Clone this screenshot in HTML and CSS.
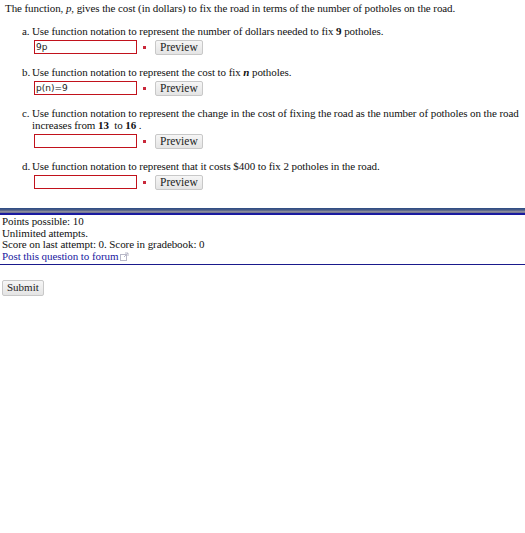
FILE: index.html
```html
<!DOCTYPE html>
<html>
<head>
<meta charset="utf-8">
<link rel="stylesheet" href="styles.css">
</head>
<body>
<div class="question">
  <p class="intro">The function, <i>p</i>, gives the cost (in dollars) to fix the road in terms of the number of potholes on the road.</p>
  <div class="part">
    <div class="prompt"><span class="lbl">a.</span><span class="txt">Use function notation to represent the number of dollars needed to fix <b>9</b> potholes.</span></div>
    <div class="answer"><input class="box" type="text" value="9p"><span class="mark"></span><button class="btn">Preview</button></div>
  </div>
  <div class="part">
    <div class="prompt"><span class="lbl">b.</span><span class="txt">Use function notation to represent the cost to fix <i><b>n</b></i> potholes.</span></div>
    <div class="answer"><input class="box" type="text" value="p(n)=9"><span class="mark"></span><button class="btn">Preview</button></div>
  </div>
  <div class="part">
    <div class="prompt"><span class="lbl">c.</span><span class="txt">Use function notation to represent the change in the cost of fixing the road as the number of potholes on the road increases from <b>13</b> &nbsp;to <b>16</b> .</span></div>
    <div class="answer"><input class="box" type="text" value=""><span class="mark"></span><button class="btn">Preview</button></div>
  </div>
  <div class="part">
    <div class="prompt"><span class="lbl">d.</span><span class="txt">Use function notation to represent that it costs $400 to fix 2 potholes in the road.</span></div>
    <div class="answer"><input class="box" type="text" value=""><span class="mark"></span><button class="btn">Preview</button></div>
  </div>
</div>
<div class="bar"></div>
<div class="info">
  <div>Points possible: 10</div>
  <div>Unlimited attempts.</div>
  <div>Score on last attempt: 0. Score in gradebook: 0</div>
  <div><a class="forum" href="#">Post this question to forum</a><svg class="ext" width="9" height="9" viewBox="0 0 9 9"><rect x="0.5" y="2.5" width="6" height="6" fill="none" stroke="#b8b8c8"/><path d="M4 5 L8 1 M5 1 H8 V4" fill="none" stroke="#b8b8c8"/></svg></div>
</div>
<div class="actions"><button class="btn submit">Submit</button></div>
</body>
</html>
```
FILE: styles.css
```css
html, body {
  margin: 0;
  padding: 0;
  background: #fff;
}
body {
  font-family: "Liberation Serif", "Times New Roman", serif;
  font-size: 11px;
  letter-spacing: -0.08px;
  color: #111;
}
.question {
  padding: 1px 5px 0 5px;
}
.intro {
  margin: 0 0 10px 0;
  line-height: 14px;
}
.part {
  margin-left: 17px;
  margin-bottom: 12px;
}
.part:last-child {
  margin-bottom: 0;
}
.prompt {
  display: flex;
  line-height: 12px;
}
.lbl {
  width: 10px;
  flex: none;
}
.txt {
  flex: 1;
}
.answer {
  display: flex;
  align-items: center;
  height: 14px;
  margin-top: 3px;
  margin-left: 12px;
}
.box {
  width: 99px;
  height: 12px;
  border: 1px solid #c1121c;
  padding: 0 1px;
  margin: 0;
  font-family: "DejaVu Sans", sans-serif;
  font-size: 9px;
  letter-spacing: 0;
  color: #222;
  box-sizing: content-box;
}
.mark {
  width: 3px;
  height: 3px;
  background: #c9283a;
  margin-left: 6px;
  margin-right: 9px;
}
.btn {
  font-family: "Liberation Serif", "Times New Roman", serif;
  font-size: 11.5px;
  letter-spacing: 0;
  color: #222;
  background: linear-gradient(#f6f6f6, #e4e4e4);
  border: 1px solid #c8c8c8;
  border-radius: 2px;
  padding: 0 4px;
  height: 15px;
  line-height: 13px;
  margin: 0;
}
.bar {
  margin-top: 19px;
  height: 5px;
  background: linear-gradient(#2a4a84, #4a5c86 40%, #8c8c9c 70%, #6a7290);
  border-bottom: 2px solid #1a1aa0;
  box-shadow: 0 1px 0 #fff;
}
.info {
  padding: 1px 2px;
  line-height: 11.7px;
  border-bottom: 1px solid #1a1a8c;
  color: #111;
}
.forum {
  color: #2020a0;
  text-decoration: none;
}
.ext {
  margin-left: 2px;
  vertical-align: -1px;
}
.actions {
  padding: 15px 2px;
}
.submit {
  font-size: 11px;
  height: 16px;
  padding: 0 4px;
}
```
